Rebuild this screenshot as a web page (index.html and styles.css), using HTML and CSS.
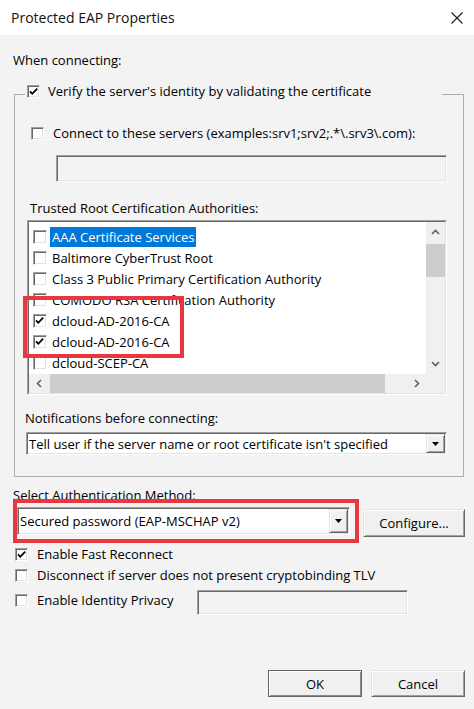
FILE: index.html
```html
<!DOCTYPE html>
<html>
<head>
<meta charset="utf-8">
<title>Protected EAP Properties</title>
<link rel="stylesheet" href="styles.css">
</head>
<body>
<div class="window">
  <header class="titlebar">
    <span class="title">Protected EAP Properties</span>
    <svg class="close" width="12" height="12" viewBox="0 0 12 12"><path d="M0.5 0.5 L11.5 11.5 M11.5 0.5 L0.5 11.5" stroke="#1a1a1a" stroke-width="1.1" fill="none"/></svg>
  </header>
  <main class="content">
    <div class="label">When connecting:</div>
    <fieldset class="group">
      <legend class="legend">
        <span class="cb"><svg class="tick" width="11" height="11" viewBox="0 0 11 11"><path d="M2 5.3 L4.3 7.8 L9.2 2.6" fill="none" stroke="#000" stroke-width="1.8"/></svg></span>
        <span>Verify the server's identity by validating the certificate</span>
      </legend>
      <div class="row connect"><span class="cb"></span><span>Connect to these servers (examples:srv1;srv2;.*\.srv3\.com):</span></div>
      <div class="field sunken servers"></div>
      <div class="label trusted">Trusted Root Certification Authorities:</div>
      <div class="listbox">
        <div class="listbox-inner">
          <div class="list-area">
            <ul class="items">
              <li class="item"><span class="cb"></span><span class="item-text selected">AAA Certificate Services</span></li>
              <li class="item"><span class="cb"></span><span class="item-text">Baltimore CyberTrust Root</span></li>
              <li class="item"><span class="cb"></span><span class="item-text">Class 3 Public Primary Certification Authority</span></li>
              <li class="item"><span class="cb"></span><span class="item-text">COMODO RSA Certification Authority</span></li>
              <li class="item"><span class="cb"><svg class="tick" width="11" height="11" viewBox="0 0 11 11"><path d="M2 5.3 L4.3 7.8 L9.2 2.6" fill="none" stroke="#000" stroke-width="1.8"/></svg></span><span class="item-text">dcloud-AD-2016-CA</span></li>
              <li class="item"><span class="cb"><svg class="tick" width="11" height="11" viewBox="0 0 11 11"><path d="M2 5.3 L4.3 7.8 L9.2 2.6" fill="none" stroke="#000" stroke-width="1.8"/></svg></span><span class="item-text">dcloud-AD-2016-CA</span></li>
              <li class="item"><span class="cb"></span><span class="item-text">dcloud-SCEP-CA</span></li>
            </ul>
            <div class="vscroll">
              <span class="sb-btn"><svg width="9" height="6" viewBox="0 0 9 6"><path d="M1 5 L4.5 1.5 L8 5" fill="none" stroke="#5f5f5f" stroke-width="1.6"/></svg></span>
              <span class="vthumb"></span>
              <span class="spacer"></span>
              <span class="sb-btn"><svg width="9" height="6" viewBox="0 0 9 6"><path d="M1 1 L4.5 4.5 L8 1" fill="none" stroke="#5f5f5f" stroke-width="1.6"/></svg></span>
            </div>
          </div>
          <div class="hscroll">
            <span class="sb-btn"><svg width="6" height="9" viewBox="0 0 6 9"><path d="M5 1 L1.5 4.5 L5 8" fill="none" stroke="#5f5f5f" stroke-width="1.6"/></svg></span>
            <span class="hthumb"></span>
            <span class="spacer"></span>
            <span class="sb-btn"><svg width="6" height="9" viewBox="0 0 6 9"><path d="M1 1 L4.5 4.5 L1 8" fill="none" stroke="#5f5f5f" stroke-width="1.6"/></svg></span>
            <span class="corner"></span>
          </div>
        </div>
        <div class="mark mark-list"></div>
      </div>
      <div class="label notif-label">Notifications before connecting:</div>
      <div class="combo sunken notif">
        <span class="combo-text">Tell user if the server name or root certificate isn't specified</span>
        <span class="drop"><svg width="7" height="4" viewBox="0 0 7 4"><path d="M0 0 H7 L3.5 4 Z" fill="#000"/></svg></span>
      </div>
    </fieldset>
    <div class="label select-label">Select Authentication Method:</div>
    <div class="auth-row">
      <div class="auth-wrap">
        <div class="combo sunken auth-combo">
          <span class="combo-text">Secured password (EAP-MSCHAP v2)</span>
          <span class="drop"><svg width="7" height="4" viewBox="0 0 7 4"><path d="M0 0 H7 L3.5 4 Z" fill="#000"/></svg></span>
        </div>
        <div class="mark mark-auth"></div>
      </div>
      <button class="btn configure" type="button">Configure...</button>
    </div>
    <div class="row opt opt1"><span class="cb"><svg class="tick" width="11" height="11" viewBox="0 0 11 11"><path d="M2 5.3 L4.3 7.8 L9.2 2.6" fill="none" stroke="#000" stroke-width="1.8"/></svg></span><span>Enable Fast Reconnect</span></div>
    <div class="row opt opt2"><span class="cb"></span><span>Disconnect if server does not present cryptobinding TLV</span></div>
    <div class="row opt opt3"><span class="cb"></span><span class="privacy-label">Enable Identity Privacy</span><span class="field sunken privacy-field"></span></div>
    <div class="buttons">
      <button class="btn dlg ok" type="button">OK</button>
      <button class="btn dlg" type="button">Cancel</button>
    </div>
  </main>
</div>
</body>
</html>
```
FILE: styles.css
```css
* { box-sizing: border-box; }
html, body { margin: 0; padding: 0; }
body {
  width: 474px;
  height: 709px;
  overflow: hidden;
  background: #f3f3f3;
  font-family: "Open Sans", "Noto Sans", sans-serif;
  font-size: 13px;
  color: #000;
}
.window {
  width: 474px;
  height: 709px;
  background: #f3f3f3;
  display: flex;
  flex-direction: column;
}
.titlebar {
  height: 35px;
  flex: none;
  background: #fff;
  display: flex;
  align-items: center;
  padding: 0 11px;
}
.title { flex: 1; font-size: 14px; line-height: 18px; color: #111; }
.close { flex: none; }

.content {
  padding: 16px 9px 0 13px;
  display: flex;
  flex-direction: column;
  align-items: flex-start;
}
.label { line-height: 18px; white-space: nowrap; }

.group {
  margin: 14px 0 0 1px;
  width: 450px;
  min-width: 0;
  border: 1px solid #adadad;
  padding: 0 0 21px 10px;
}
.legend {
  width: 417px;
  height: 22px;
  padding: 0 0 6px 2px;
  display: flex;
  align-items: center;
  gap: 8px;
  line-height: 16px;
  white-space: nowrap;
}

.cb {
  width: 13px;
  height: 13px;
  flex: none;
  background: #fff;
  border: 1px solid;
  border-color: #a0a0a0 #fff #fff #a0a0a0;
  box-shadow: inset 1px 1px 0 #696969, inset -1px -1px 0 #e3e3e3;
  display: flex;
  align-items: center;
  justify-content: center;
  position: relative;
}
.tick { position: absolute; left: 0; top: 0; }

.row { display: flex; align-items: center; line-height: 18px; white-space: nowrap; }
.connect { margin: 19px 0 0 6px; gap: 9px; }

.sunken {
  border: 1px solid;
  border-color: #a0a0a0 #fff #fff #a0a0a0;
  box-shadow: inset 1px 1px 0 #696969, inset -1px -1px 0 #e3e3e3;
  padding: 1px;
}
.field { display: block; background: #f3f3f3; }
.servers { margin: 13px 0 0 31px; width: 391px; height: 27px; }
.trusted { margin: 14px 0 0 5px; line-height: 24px; }

.listbox {
  position: relative;
  margin-left: 2px;
  width: 420px;
  height: 175px;
  background: #fff;
  border: 1px solid;
  border-color: #a0a0a0 #fff #fff #a0a0a0;
}
.listbox-inner {
  height: 100%;
  border: 1px solid;
  border-color: #696969 #e3e3e3 #e3e3e3 #696969;
  display: flex;
  flex-direction: column;
}
.list-area { display: flex; height: 152px; flex: none; }
.items {
  list-style: none;
  margin: 0;
  padding: 4px 0 0 4px;
  flex: 1;
  overflow: hidden;
}
.item { height: 21px; display: flex; align-items: center; white-space: nowrap; }
.item .cb { width: 14px; height: 14px; }
.item-text { margin-left: 3px; padding: 0 2px; line-height: 20px; }
.item-text.selected { background: #0078d7; color: #fff; }

.vscroll {
  width: 19px;
  flex: none;
  background: #f0f0f0;
  display: flex;
  flex-direction: column;
}
.sb-btn {
  width: 19px;
  height: 20px;
  flex: none;
  display: flex;
  align-items: center;
  justify-content: center;
}
.vthumb { height: 33px; margin-top: 2px; background: #cdcdcd; flex: none; }
.spacer { flex: 1; }
.hscroll { height: 19px; flex: none; display: flex; background: #f0f0f0; }
.hscroll .sb-btn { height: 19px; }
.hthumb { margin-left: 2px; width: 335px; background: #cdcdcd; flex: none; }
.corner { width: 19px; flex: none; background: #f0f0f0; }

.mark {
  position: absolute;
  border: 4px solid #e8373e;
  pointer-events: none;
}
.mark-list { left: -5px; top: 75px; width: 161px; height: 62px; }
.mark-auth { left: -4px; top: -8px; width: 346px; height: 44px; }

.notif-label { margin-top: 14px; }
.combo { display: flex; background: #fff; }
.combo-text {
  flex: 1;
  padding-left: 1px;
  display: flex;
  align-items: center;
  white-space: nowrap;
  overflow: hidden;
}
.drop {
  width: 19px;
  flex: none;
  background: #f0f0f0;
  border: 1px solid;
  border-color: #e3e3e3 #696969 #696969 #e3e3e3;
  box-shadow: inset 1px 1px 0 #fff, inset -1px -1px 0 #a0a0a0;
  display: flex;
  align-items: center;
  justify-content: center;
}
.notif { margin: 5px 0 0 1px; width: 421px; height: 23px; }

.select-label { margin-top: 9px; }
.auth-row { display: flex; align-items: flex-start; margin-top: 3px; }
.auth-wrap { position: relative; margin-left: 4px; }
.auth-combo { width: 333px; height: 28px; }

.btn {
  font: inherit;
  color: #000;
  background: #f0f0f0;
  border: 1px solid;
  border-color: #e3e3e3 #696969 #696969 #e3e3e3;
  box-shadow: inset 1px 1px 0 #fff, inset -1px -1px 0 #a0a0a0;
  padding: 0;
  display: flex;
  align-items: center;
  justify-content: center;
}
.configure { margin: 2px 0 0 13px; width: 102px; height: 28px; }

.opt { margin-left: 2px; gap: 9px; }
.opt1 { margin-top: 8px; }
.opt2 { margin-top: 3px; }
.opt3 { margin-top: 7px; align-items: flex-start; }
.opt3 .cb { margin-top: 3px; }
.privacy-label { width: 151px; }
.privacy-field { width: 211px; height: 25px; margin-top: -1px; }

.buttons {
  align-self: stretch;
  display: flex;
  justify-content: flex-end;
  gap: 9px;
  margin-top: 55px;
}
.dlg { width: 94px; height: 27px; }
.ok {
  border-color: #646464;
  box-shadow: inset 1px 1px 0 #fff, inset -1px -1px 0 #8a8a8a;
}
```
